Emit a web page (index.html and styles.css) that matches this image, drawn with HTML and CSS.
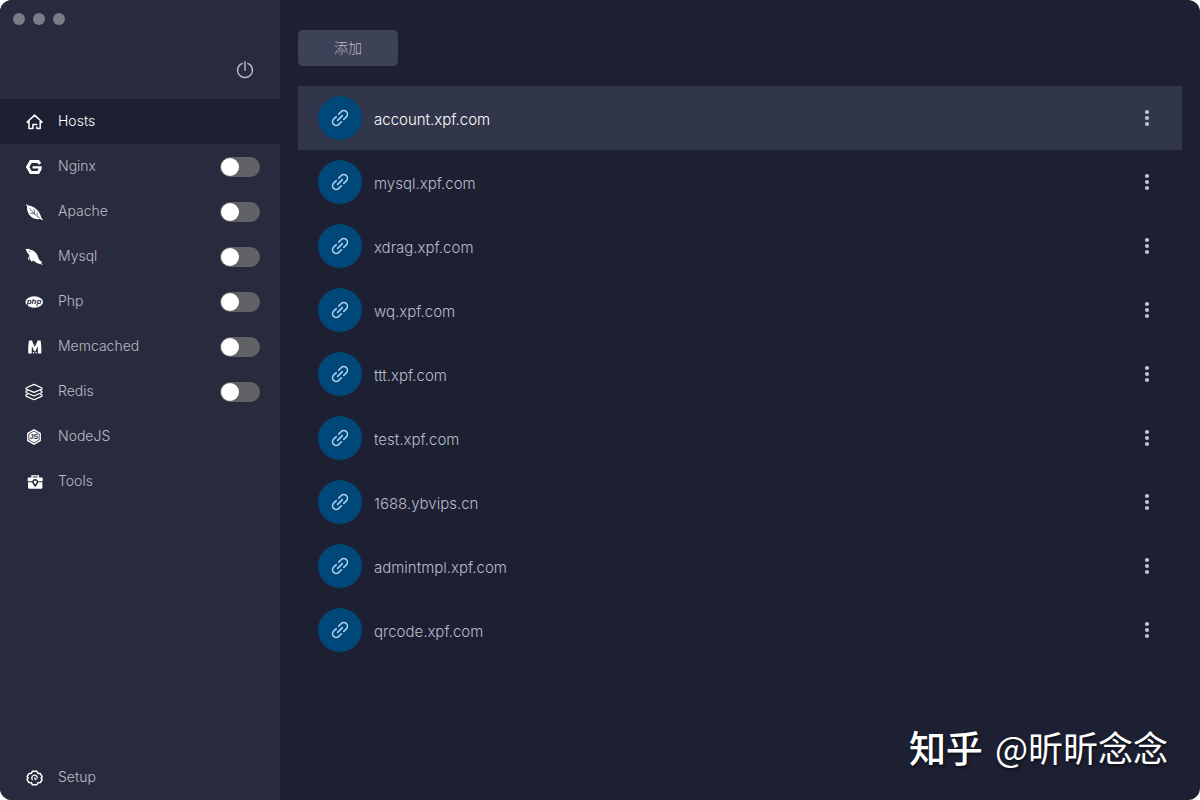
FILE: index.html
```html
<!DOCTYPE html>
<html lang="zh-CN">
<head>
    <meta charset="UTF-8">
    <meta name="viewport" content="width=device-width, initial-scale=1.0">
    <title>Hosts</title>
    <link rel="stylesheet" href="styles.css">
</head>
<body>
    <svg class="sprite" aria-hidden="true">
        <symbol id="icon-link" viewBox="0 0 24 24">
            <g transform="rotate(-45 12 12)" fill="none" stroke="currentColor" stroke-width="1.9" stroke-linecap="round">
                <path d="M10 7.6H5.6a4.4 4.4 0 0 0 0 8.8H10"/>
                <path d="M14 7.6h4.4a4.4 4.4 0 0 1 0 8.8H14"/>
                <path d="M8 12h8"/>
            </g>
        </symbol>
        <symbol id="icon-more" viewBox="0 0 18 18">
            <circle cx="9" cy="3" r="2.1"/>
            <circle cx="9" cy="9" r="2.1"/>
            <circle cx="9" cy="15" r="2.1"/>
        </symbol>
    </svg>

    <div class="app">
        <aside class="sidebar">
            <div class="window-dots">
                <button type="button" aria-label="Close"></button>
                <button type="button" aria-label="Minimize"></button>
                <button type="button" aria-label="Zoom"></button>
            </div>
            <div class="power-bar">
                <button type="button" class="power" aria-label="Power">
                    <svg viewBox="0 0 18 18" fill="none" stroke="currentColor" stroke-width="1.4" stroke-linecap="round">
                        <path d="M6.2 2.3a7.4 7.4 0 1 0 5.6 0"/>
                        <path d="M9 .8v8.4"/>
                    </svg>
                </button>
            </div>

            <nav class="menu">
                <div class="menu-item active">
                    <svg class="menu-icon" viewBox="0 0 18 18" fill="none" stroke="currentColor" stroke-width="1.5" stroke-linejoin="round" stroke-linecap="round">
                        <path d="M2.6 9.4 2.2 9l7.4-6.900L17 9l-.4.4M4 8.200v7.400h3.900v-4.100h3.900M15.200 8.200v7.400h-3.400v-1.500"/>
                    </svg>
                    <a href="#hosts">Hosts</a>
                </div>
                <div class="menu-item">
                    <svg class="menu-icon" viewBox="0 0 18 18" fill="none" stroke="currentColor" stroke-width="3">
                        <path d="M15 5.900 13.200 3.400H5.800L2.600 9l3.200 5.600h7.400l2.300-4.500"/>
                        <path d="M7.500 9.400h9.200" stroke-width="2.200"/>
                    </svg>
                    <a href="#nginx">Nginx</a>
                    <input type="checkbox" class="switch" aria-label="Nginx">
                </div>
                <div class="menu-item">
                    <svg class="menu-icon" viewBox="0 0 18 18">
                        <path fill="currentColor" d="M1.600.600c.4 1 .8 1.400 1.600 1.900 3.800.3 8 2.700 10.200 5.800 1.500 2.200 2.300 4.500 3.100 6.700l1.500 1.700-.7.500-1.900-1.200c-3.400.5-7.200-.1-9.600-2.400C2.800 10.900 1.800 7 2.100 3.500 1.400 2.600 1.200 1.600 1.600.6Z"/>
                        <path fill="none" stroke="#282b3d" stroke-width=".7" d="M4.500 5.200c2.700 3.500 5.800 7.200 10.300 9.800M9 6.200l.5 3.800M12.200 9.500v3M5.200 10.200l4.400.6"/>
                    </svg>
                    <a href="#apache">Apache</a>
                    <input type="checkbox" class="switch" aria-label="Apache">
                </div>
                <div class="menu-item">
                    <svg class="menu-icon" viewBox="0 0 18 18" fill="currentColor">
                        <path d="M.6 1.300C1.800.2 3.700.7 5.600 1.800c3.600.7 6.100 3.200 7.300 6.600.6 1.700 1.100 3.300 2.500 4.300l2.400 1.800-2.200.1 2.400 2.700-2.700-1.200c-2.300-.3-4.700-1.500-6.500-3.300l-1.100-.1-.8 1.200-1.800-2.200-1-2.900.2-1.500L2.500 4.900Z"/>
                        <path d="m3.700 9 .9 3.500-1.300-.9-.4-2Z"/>
                        <circle cx="4.800" cy="3.500" r=".6" fill="#282b3d"/>
                    </svg>
                    <a href="#mysql">Mysql</a>
                    <input type="checkbox" class="switch" aria-label="Mysql">
                </div>
                <div class="menu-item">
                    <svg class="menu-icon" viewBox="0 0 18 18">
                        <ellipse cx="9.200" cy="9" rx="8.800" ry="5.800" fill="currentColor"/>
                        <text class="php-mark" x="9" y="11" text-anchor="middle">php</text>
                    </svg>
                    <a href="#php">Php</a>
                    <input type="checkbox" class="switch" aria-label="Php">
                </div>
                <div class="menu-item">
                    <svg class="menu-icon" viewBox="0 0 18 18" fill="currentColor">
                        <path d="M4 2.500h2.900L9.800 9l2.900-6.500h2.900c.7 4 .9 8.500.7 13h-3.400c.1-2.600 0-5-.3-7.200l-2.100 5H9.100l-2.100-5c-.3 2.200-.4 4.600-.3 7.200H3.300c-.2-4.500 0-9 .7-13Z"/>
                        <circle cx="8.500" cy="14.800" r=".8"/>
                        <circle cx="11.100" cy="14.800" r=".8"/>
                    </svg>
                    <a href="#memcached">Memcached</a>
                    <input type="checkbox" class="switch" aria-label="Memcached">
                </div>
                <div class="menu-item">
                    <svg class="menu-icon" viewBox="0 0 18 18" fill="none" stroke="currentColor" stroke-width="1.200" stroke-linejoin="round">
                        <path d="M9 1.400 17 5v1L9 9.400 1 6V5Z"/>
                        <path d="M3 7.400l-2 .8v1.300l8 3.500 8-3.500V8.200l-2-.8"/>
                        <path d="M3 11l-2 .8v1.300l8 3.600 8-3.600v-1.300l-2-.8"/>
                    </svg>
                    <a href="#redis">Redis</a>
                    <input type="checkbox" class="switch" aria-label="Redis">
                </div>
                <div class="menu-item">
                    <svg class="menu-icon" viewBox="0 0 18 18">
                        <path fill="currentColor" d="M9 1 15.900 4.900v8.200L9 17l-6.900-3.900V4.900Z"/>
                        <path fill="none" stroke="#282b3d" stroke-width=".8" d="M9 3.100 14.200 6v6L9 14.900 3.800 12V6Z"/>
                        <text class="node-mark" x="9" y="11.400" text-anchor="middle">JS</text>
                    </svg>
                    <a href="#nodejs">NodeJS</a>
                </div>
                <div class="menu-item">
                    <svg class="menu-icon" viewBox="0 0 18 18">
                        <path fill="none" stroke="currentColor" stroke-width="1.400" d="M7 5V2.900h6.400V5"/>
                        <path fill="currentColor" d="M3.900 4.400h12.600c.7 0 1.200.5 1.200 1.200v2.700h-15V5.600c0-.7.500-1.200 1.200-1.200ZM3 9.200h14.400v5.400c0 .7-.5 1.200-1.200 1.200h-12c-.7 0-1.200-.5-1.200-1.200Z"/>
                        <path fill="#282b3d" d="M10.200 6c1.700 0 3 1.300 3 2.900 0 1.700-1.400 2.900-3 5.200-1.600-2.300-3-3.500-3-5.200C7.200 7.300 8.500 6 10.200 6Z"/>
                        <path fill="currentColor" d="M8.900 7.700h2.600v2.100l-1.300 1.500-1.300-1.500Z"/>
                    </svg>
                    <a href="#tools">Tools</a>
                </div>
            </nav>

            <div class="menu-item setup">
                <svg class="menu-icon" viewBox="0 0 18 18" fill="none" stroke="currentColor" stroke-width="1.500" stroke-linejoin="round">
                    <path d="M7.400 2.300h4.500l1 2.100 2.400.2 1.900 3-1.100 1.400 1.100 1.600-1.900 2.900-2.400.2-1 2.100H7.400l-1.100-2.100-2.400-.2L2 10.600 3.200 9 2 7.600l1.900-3 2.400-.2Z"/>
                    <path stroke-width="1.300" d="M7.600 11a2.800 2.800 0 1 1 4.700-1.500M9.300 8.800l2 2.200"/>
                </svg>
                <a href="#setup">Setup</a>
            </div>
        </aside>

        <main class="content">
            <button type="button" class="add-button">添加</button>
            <ul class="host-list">
                <li class="host active">
                    <span class="host-icon"><svg><use href="#icon-link"/></svg></span>
                    <span class="host-name">account.xpf.com</span>
                    <button type="button" class="more" aria-label="More"><svg><use href="#icon-more"/></svg></button>
                </li>
                <li class="host">
                    <span class="host-icon"><svg><use href="#icon-link"/></svg></span>
                    <span class="host-name">mysql.xpf.com</span>
                    <button type="button" class="more" aria-label="More"><svg><use href="#icon-more"/></svg></button>
                </li>
                <li class="host">
                    <span class="host-icon"><svg><use href="#icon-link"/></svg></span>
                    <span class="host-name">xdrag.xpf.com</span>
                    <button type="button" class="more" aria-label="More"><svg><use href="#icon-more"/></svg></button>
                </li>
                <li class="host">
                    <span class="host-icon"><svg><use href="#icon-link"/></svg></span>
                    <span class="host-name">wq.xpf.com</span>
                    <button type="button" class="more" aria-label="More"><svg><use href="#icon-more"/></svg></button>
                </li>
                <li class="host">
                    <span class="host-icon"><svg><use href="#icon-link"/></svg></span>
                    <span class="host-name">ttt.xpf.com</span>
                    <button type="button" class="more" aria-label="More"><svg><use href="#icon-more"/></svg></button>
                </li>
                <li class="host">
                    <span class="host-icon"><svg><use href="#icon-link"/></svg></span>
                    <span class="host-name">test.xpf.com</span>
                    <button type="button" class="more" aria-label="More"><svg><use href="#icon-more"/></svg></button>
                </li>
                <li class="host">
                    <span class="host-icon"><svg><use href="#icon-link"/></svg></span>
                    <span class="host-name">1688.ybvips.cn</span>
                    <button type="button" class="more" aria-label="More"><svg><use href="#icon-more"/></svg></button>
                </li>
                <li class="host">
                    <span class="host-icon"><svg><use href="#icon-link"/></svg></span>
                    <span class="host-name">admintmpl.xpf.com</span>
                    <button type="button" class="more" aria-label="More"><svg><use href="#icon-more"/></svg></button>
                </li>
                <li class="host">
                    <span class="host-icon"><svg><use href="#icon-link"/></svg></span>
                    <span class="host-name">qrcode.xpf.com</span>
                    <button type="button" class="more" aria-label="More"><svg><use href="#icon-more"/></svg></button>
                </li>
            </ul>
        </main>

        <div class="watermark"><strong>知乎</strong><span>@昕昕念念</span></div>
    </div>
</body>
</html>
```
FILE: styles.css
```css
* {
    box-sizing: border-box;
}

body {
    margin: 0;
    background-color: #fff;
    color: #b9bbc7;
    font-family: Inter, "Noto Sans CJK SC", sans-serif;
    font-size: 14px;
    font-weight: 300;
}

button {
    padding: 0;
    border: none;
    background: none;
    color: inherit;
    font: inherit;
    cursor: pointer;
}

a {
    color: inherit;
    text-decoration: none;
}

.sprite {
    display: none;
}

.app {
    position: relative;
    display: flex;
    min-height: 100vh;
    border-radius: 12px;
    overflow: hidden;
    background-color: #1d2033;
}

/* sidebar */
.sidebar {
    display: flex;
    flex-direction: column;
    flex: 0 0 280px;
    background-color: #282b3d;
}

.window-dots {
    display: flex;
    gap: 8px;
    padding: 13px 13px 0;
}

.window-dots button {
    width: 12px;
    height: 12px;
    border-radius: 50%;
    background-color: #7b7c86;
}

.power-bar {
    display: flex;
    justify-content: flex-end;
    padding: 36px 26px 20px;
}

.power {
    width: 18px;
    height: 18px;
}

.power svg {
    display: block;
}

.menu {
    flex: 1;
}

.menu-item {
    display: flex;
    align-items: center;
    height: 45px;
    padding: 0 20px 0 25px;
}

.menu-item.active {
    background-color: #1d2033;
    color: #fff;
}

.menu-item a {
    flex: 1;
    line-height: 20px;
    padding-bottom: 1px;
}

.menu-icon {
    width: 18px;
    height: 18px;
    margin-right: 15px;
    color: #fff;
}

.php-mark {
    font: italic bold 8px "Liberation Sans", sans-serif;
    fill: #282b3d;
}

.node-mark {
    font: bold 7px "Liberation Sans", sans-serif;
    fill: #282b3d;
}

.switch {
    appearance: none;
    width: 40px;
    height: 20px;
    margin: 0;
    padding: 1px;
    border-radius: 10px;
    background-color: #606266;
    cursor: pointer;
}

.switch::before {
    content: "";
    display: block;
    width: 18px;
    height: 18px;
    border-radius: 50%;
    background-color: #fff;
}

.switch:checked {
    background-color: #01487a;
}

.switch:checked::before {
    margin-left: 20px;
}

/* host list */
.content {
    flex: 1;
    min-width: 0;
    padding: 30px 18px;
}

.add-button {
    display: block;
    width: 100px;
    height: 36px;
    padding-bottom: 2px;
    border-radius: 5px;
    background-color: #3e4257;
}

.host-list {
    margin: 20px 0 0;
    padding: 0;
    list-style: none;
}

.host {
    display: flex;
    align-items: center;
    gap: 12px;
    height: 64px;
    padding: 0 26px 0 20px;
    font-size: 15px;
}

.host.active {
    background-color: #32364a;
}

.host.active .host-name {
    color: #fff;
}

.host-icon {
    display: flex;
    align-items: center;
    justify-content: center;
    width: 44px;
    height: 44px;
    border-radius: 50%;
    background-color: #01487a;
    color: #a8cdf0;
}

.host-icon svg {
    width: 20px;
    height: 20px;
}

.host-name {
    flex: 1;
    padding-top: 2px;
}

.more svg {
    display: block;
    width: 18px;
    height: 18px;
    fill: #c0c2d0;
}

.watermark {
    position: absolute;
    right: 32px;
    bottom: 28px;
    display: flex;
    gap: 12px;
    color: #fff;
    font-family: "Noto Sans CJK SC", sans-serif;
    font-size: 35px;
    font-weight: 400;
    line-height: 50px;
    text-shadow: 1px 2px 3px rgba(0, 0, 0, 0.6);
}

.watermark strong {
    font-size: 37px;
    font-weight: 500;
}
```
